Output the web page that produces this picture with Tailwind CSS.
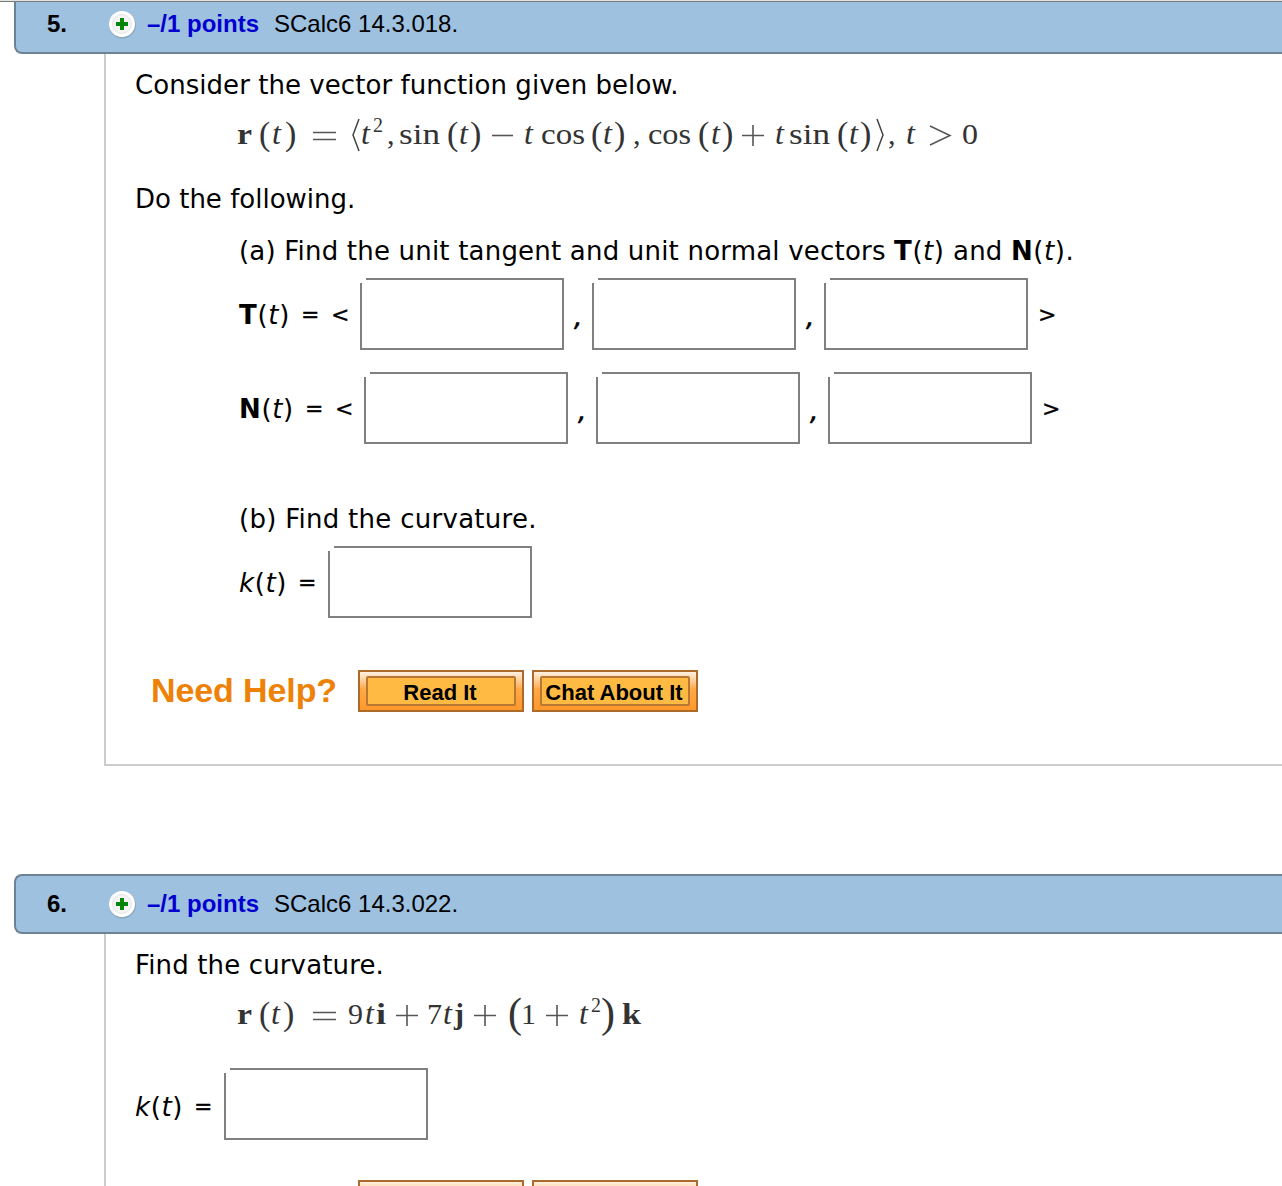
<!DOCTYPE html>
<html lang="en">
<head>
    <meta charset="UTF-8">
    <meta name="viewport" content="width=device-width, initial-scale=1.0">
    <title>SCalc6 14.3 Homework</title>
    <script src="https://cdn.jsdelivr.net/npm/@tailwindcss/browser@4"></script>
</head>
<body class="bg-white text-black h-[1186px] w-[1282px] overflow-hidden font-['DejaVu_Sans',sans-serif] text-[26px] leading-[32px] whitespace-nowrap">
    <div class="h-[2px] bg-[#e4e4e0] border-b border-[#777b7b]"></div>

    <!-- Question 5 -->
    <section>
        <header class="ml-[14px] h-[52px] flex items-start pt-[6px] bg-[#9dc1df] border-l-2 border-b-2 border-[#6c8393] rounded-bl-[8px] font-['Liberation_Sans',sans-serif] text-[24px]">
            <span class="w-[91px] pl-[31px] font-bold">5.</span>
            <svg class="w-[30px] h-[30px] mt-[1px] shrink-0" viewBox="0 0 30 30">
                <circle cx="15.5" cy="16" r="13.5" fill="#8297a8" opacity=".6"/>
                <circle cx="15" cy="15" r="13" fill="#fff"/>
                <circle cx="15" cy="15" r="9.5" fill="#f4f4f6" stroke="#e6e6e8"/>
                <path d="M13 9h4v4h4v4h-4v4h-4v-4h-4v-4h4z" fill="#068606"/>
            </svg>
            <span class="ml-[10px] w-[127px] font-bold text-[#0000d0]">–/1 points</span>
            <span>SCalc6 14.3.018.</span>
        </header>

        <div class="ml-[104px] h-[712px] border-l-2 border-b-2 border-[#ccc] pl-[29px]">
            <p class="pt-[15px] tracking-[0.05px]">Consider the vector function given below.</p>
            <svg class="w-[900px] h-[50px] mt-[9px] ml-[65px] font-['Liberation_Serif',serif]" viewBox="200 110 900 50" font-size="30" fill="#333">
                <text x="237" y="144" font-weight="bold" textLength="15" lengthAdjust="spacingAndGlyphs">r</text>
                <text x="259" y="145" font-size="34">(</text><text x="272" y="144" font-style="italic" font-size="32">t</text><text x="285" y="145" font-size="34">)</text>
                <path d="M313 132.5h23M313 139.5h23" stroke="#555" stroke-width="1.6"/>
                <path d="M359 119l-6 16 6 16" fill="none" stroke="#444" stroke-width="1.5"/>
                <text x="361" y="144" font-style="italic" font-size="32">t</text><text x="373" y="132" font-size="20">2</text><text x="387" y="144">,</text>
                <text x="399" y="144" textLength="41" lengthAdjust="spacingAndGlyphs">sin</text>
                <text x="447" y="145" font-size="34">(</text><text x="459" y="144" font-style="italic" font-size="32">t</text><text x="470" y="145" font-size="34">)</text>
                <path d="M492 135.5h21" stroke="#555" stroke-width="1.6"/>
                <text x="524" y="144" font-style="italic" font-size="32">t</text>
                <text x="541" y="144" textLength="44" lengthAdjust="spacingAndGlyphs">cos</text>
                <text x="591" y="145" font-size="34">(</text><text x="603" y="144" font-style="italic" font-size="32">t</text><text x="614" y="145" font-size="34">)</text><text x="633" y="144">,</text>
                <text x="648" y="144" textLength="43" lengthAdjust="spacingAndGlyphs">cos</text>
                <text x="698" y="145" font-size="34">(</text><text x="711" y="144" font-style="italic" font-size="32">t</text><text x="722" y="145" font-size="34">)</text>
                <path d="M742 135.5h22M753 125v21" stroke="#555" stroke-width="1.6"/>
                <text x="775" y="144" font-style="italic" font-size="32">t</text>
                <text x="789" y="144" textLength="41" lengthAdjust="spacingAndGlyphs">sin</text>
                <text x="837" y="145" font-size="34">(</text><text x="849" y="144" font-style="italic" font-size="32">t</text><text x="860" y="145" font-size="34">)</text>
                <path d="M877 119l6 16-6 16" fill="none" stroke="#444" stroke-width="1.5"/>
                <text x="888" y="144">,</text><text x="906" y="144" font-style="italic" font-size="32">t</text>
                <path d="M930 126l20 9.5-20 9.5" fill="none" stroke="#555" stroke-width="1.5"/>
                <text x="962" y="144" textLength="16" lengthAdjust="spacingAndGlyphs">0</text>
            </svg>
            <p class="mt-[23px]">Do the following.</p>

            <div class="pl-[104px]">
                <p class="mt-[20px] tracking-[0.2px]">(a) Find the unit tangent and unit normal vectors <span class="tracking-[0.55px]"><b>T</b>(<i>t</i>)</span> and <span class="tracking-[0.55px]"><b>N</b>(<i>t</i>).</span></p>
                <div class="flex h-[72px] items-center mt-[11px]">
                    <span class="w-[121px] pt-[2px] flex items-center"><span class="w-[62px] tracking-[0.7px]"><b>T</b>(<i>t</i>)</span><span class="w-[30px] text-[22px] [-webkit-text-stroke:0.3px]">=</span><span class="text-[22px] [-webkit-text-stroke:0.3px]">&lt;</span></span>
                    <svg class="w-[204px] h-[72px]" fill="none" stroke="#808080" stroke-width="2"><path d="M6 1H203V71H1V5"/></svg>
                    <i class="w-[28px] pl-[10px] pt-[6px] [-webkit-text-stroke:0.6px]">,</i>
                    <svg class="w-[204px] h-[72px]" fill="none" stroke="#808080" stroke-width="2"><path d="M6 1H203V71H1V5"/></svg>
                    <i class="w-[28px] pl-[10px] pt-[6px] [-webkit-text-stroke:0.6px]">,</i>
                    <svg class="w-[204px] h-[72px]" fill="none" stroke="#808080" stroke-width="2"><path d="M6 1H203V71H1V5"/></svg>
                    <span class="pl-[10px] pt-[2px] text-[22px] [-webkit-text-stroke:0.3px]">&gt;</span>
                </div>
                <div class="flex h-[72px] items-center mt-[22px]">
                    <span class="w-[125px] pt-[2px] flex items-center"><span class="w-[66px] tracking-[0.6px]"><b>N</b>(<i>t</i>)</span><span class="w-[30px] text-[22px] [-webkit-text-stroke:0.3px]">=</span><span class="text-[22px] [-webkit-text-stroke:0.3px]">&lt;</span></span>
                    <svg class="w-[204px] h-[72px]" fill="none" stroke="#808080" stroke-width="2"><path d="M6 1H203V71H1V5"/></svg>
                    <i class="w-[28px] pl-[10px] pt-[6px] [-webkit-text-stroke:0.6px]">,</i>
                    <svg class="w-[204px] h-[72px]" fill="none" stroke="#808080" stroke-width="2"><path d="M6 1H203V71H1V5"/></svg>
                    <i class="w-[28px] pl-[10px] pt-[6px] [-webkit-text-stroke:0.6px]">,</i>
                    <svg class="w-[204px] h-[72px]" fill="none" stroke="#808080" stroke-width="2"><path d="M6 1H203V71H1V5"/></svg>
                    <span class="pl-[10px] pt-[2px] text-[22px] [-webkit-text-stroke:0.3px]">&gt;</span>
                </div>
                <p class="mt-[59px] tracking-[0.28px]">(b) Find the curvature.</p>
                <div class="flex h-[72px] items-center mt-[11px]">
                    <span class="w-[89px] pt-[2px] flex items-center"><span class="w-[59px] tracking-[0.6px]"><i>k</i>(<i>t</i>)</span><span class="text-[22px] [-webkit-text-stroke:0.3px]">=</span></span>
                    <svg class="w-[204px] h-[72px]" fill="none" stroke="#808080" stroke-width="2"><path d="M6 1H203V71H1V5"/></svg>
                </div>
            </div>

            <div class="flex h-[42px] mt-[52px] pl-[16px] font-['Liberation_Sans',sans-serif] font-bold">
                <span class="w-[207px] text-[34px] leading-[40px] tracking-[-0.1px] text-[#ee8208]">Need Help?</span>
                <div class="w-[166px] h-[42px] py-[5px] px-[6px] border-2 border-[#ad6b2b] bg-linear-to-b from-[#fff0df] via-[#ffa945] via-45% to-[#ff982c]">
                    <div class="h-[30px] -mt-px border-2 border-[#b87732] rounded-[2px] bg-[#ffba43] -indent-[2px] text-center text-[22px] leading-[29px]">Read It</div>
                </div>
                <div class="ml-[8px] w-[166px] h-[42px] py-[5px] px-[6px] border-2 border-[#ad6b2b] bg-linear-to-b from-[#fff0df] via-[#ffa945] via-45% to-[#ff982c]">
                    <div class="h-[30px] -mt-px border-2 border-[#b87732] rounded-[2px] bg-[#ffba43] -indent-[2px] text-center text-[22px] leading-[29px]">Chat About It</div>
                </div>
            </div>
        </div>
    </section>

    <!-- Question 6 -->
    <section class="mt-[108px]">
        <header class="ml-[14px] h-[60px] flex items-start pt-[12px] bg-[#9dc1df] border-l-2 border-y-2 border-[#6c8393] rounded-l-[8px] font-['Liberation_Sans',sans-serif] text-[24px]">
            <span class="w-[91px] pl-[31px] font-bold">6.</span>
            <svg class="w-[30px] h-[30px] mt-[1px] shrink-0" viewBox="0 0 30 30">
                <circle cx="15.5" cy="16" r="13.5" fill="#8297a8" opacity=".6"/>
                <circle cx="15" cy="15" r="13" fill="#fff"/>
                <circle cx="15" cy="15" r="9.5" fill="#f4f4f6" stroke="#e6e6e8"/>
                <path d="M13 9h4v4h4v4h-4v4h-4v-4h-4v-4h4z" fill="#068606"/>
            </svg>
            <span class="ml-[10px] w-[127px] font-bold text-[#0000d0]">–/1 points</span>
            <span>SCalc6 14.3.022.</span>
        </header>

        <div class="ml-[104px] h-[300px] border-l-2 border-[#ccc] pl-[29px]">
            <p class="pt-[15px] tracking-[0.14px]">Find the curvature.</p>
            <svg class="w-[600px] h-[50px] mt-[9px] ml-[65px] font-['Liberation_Serif',serif]" viewBox="200 990 600 50" font-size="30" fill="#333">
                <text x="237" y="1024" font-weight="bold" textLength="15" lengthAdjust="spacingAndGlyphs">r</text>
                <text x="259" y="1025" font-size="34">(</text><text x="271" y="1024" font-style="italic" font-size="32">t</text><text x="283" y="1025" font-size="34">)</text>
                <path d="M313 1012.5h23M313 1019.5h23" stroke="#555" stroke-width="1.6"/>
                <text x="348" y="1024">9</text><text x="365" y="1024" font-style="italic" font-size="32">t</text><text x="376" y="1024" font-weight="bold" textLength="10" lengthAdjust="spacingAndGlyphs">i</text>
                <path d="M396 1015.5h22M407 1005v21" stroke="#555" stroke-width="1.6"/>
                <text x="427" y="1024">7</text><text x="443" y="1024" font-style="italic" font-size="32">t</text><text x="454" y="1024" font-weight="bold">j</text>
                <path d="M474 1015.5h22M485 1005v21" stroke="#555" stroke-width="1.6"/>
                <text x="508" y="1027" font-size="42">(</text><text x="521" y="1024">1</text>
                <path d="M546 1015.5h22M557 1005v21" stroke="#555" stroke-width="1.6"/>
                <text x="579" y="1024" font-style="italic" font-size="32">t</text><text x="591" y="1012" font-size="20">2</text><text x="601" y="1027" font-size="42">)</text>
                <text x="622" y="1024" font-weight="bold" textLength="19" lengthAdjust="spacingAndGlyphs">k</text>
            </svg>
            <div class="flex h-[72px] items-center mt-[28px]">
                <span class="w-[89px] pt-[6px] flex items-center"><span class="w-[59px] tracking-[0.6px]"><i>k</i>(<i>t</i>)</span><span class="text-[22px] [-webkit-text-stroke:0.3px]">=</span></span>
                <svg class="w-[204px] h-[72px]" fill="none" stroke="#808080" stroke-width="2"><path d="M6 1H203V71H1V5"/></svg>
            </div>
            <div class="flex mt-[40px] pl-[223px] gap-[8px]">
                <div class="w-[166px] h-[42px] border-2 border-[#ad6b2b] bg-linear-to-b from-[#fff0df] via-[#ffa945] via-45% to-[#ff982c]"></div>
                <div class="w-[166px] h-[42px] border-2 border-[#ad6b2b] bg-linear-to-b from-[#fff0df] via-[#ffa945] via-45% to-[#ff982c]"></div>
            </div>
        </div>
    </section>
</body>
</html>
